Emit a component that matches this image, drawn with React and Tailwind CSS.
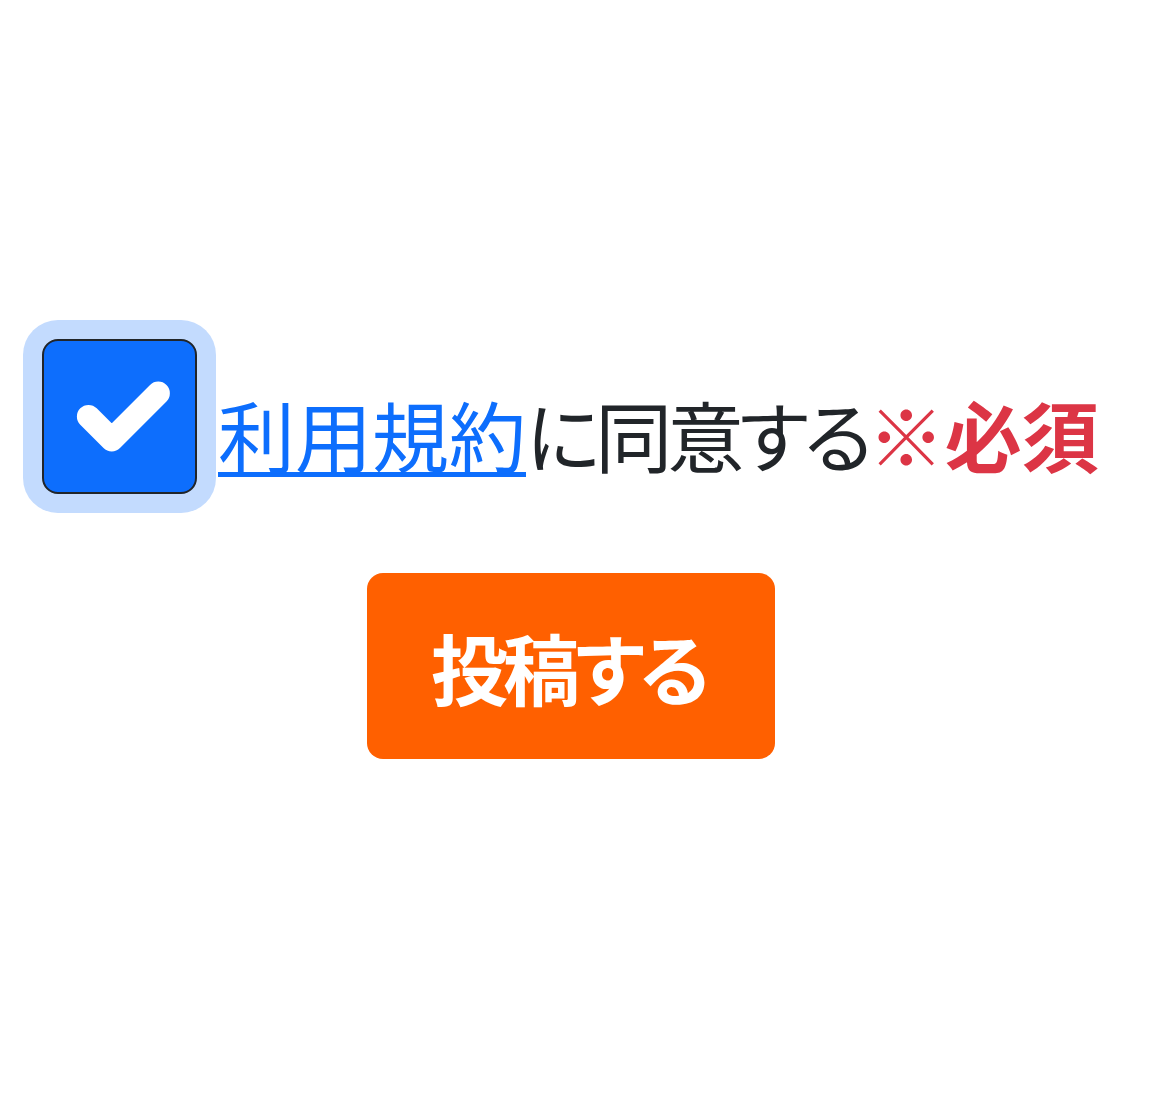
export default function App() {
  return (
    <div
      className="min-h-[1105px] w-full bg-white text-[#212529]"
      style={{ fontFamily: '"Noto Sans CJK JP", "Noto Sans", sans-serif' }}
    >
      <div className="w-[1142px] pt-[339px]">
        {/* agreement row */}
        <div className="flex items-start pl-[42px]">
          <div className="relative h-[155px] w-[155px] shrink-0 rounded-[16px] border-2 border-[#212529] bg-[#0d6efd] shadow-[0_0_0_19px_#c3dbfe]">
            <svg
              viewBox="0 0 20 20"
              className="absolute -inset-[2px] h-[155px] w-[155px]"
              fill="none"
            >
              <path
                d="m6 10 3 3 6-6"
                stroke="#fff"
                strokeWidth="3"
                strokeLinecap="round"
                strokeLinejoin="round"
              />
            </svg>
          </div>
          <label className="ml-[21px] mt-[37px] text-[77px] leading-[1.5] [font-feature-settings:'palt'] whitespace-nowrap">
            <a href="#" className="text-[#0d6efd] underline decoration-[5px] underline-offset-[5px]">
              利用規約
            </a>
            <span className="tracking-[-5px]">に同意する</span>
            <span className="text-[#dc3545]">
              ※<span className="font-bold">必須</span>
            </span>
          </label>
        </div>

        {/* submit */}
        <div className="mt-[79px] flex justify-center">
          <button
            type="button"
            className="flex h-[186px] w-[408px] items-center justify-center rounded-[16px] bg-[#ff6000] pr-[6px] text-[77px] font-bold leading-none tracking-[-5px] text-white [font-feature-settings:'palt']"
          >
            投稿する
          </button>
        </div>
      </div>
    </div>
  );
}
